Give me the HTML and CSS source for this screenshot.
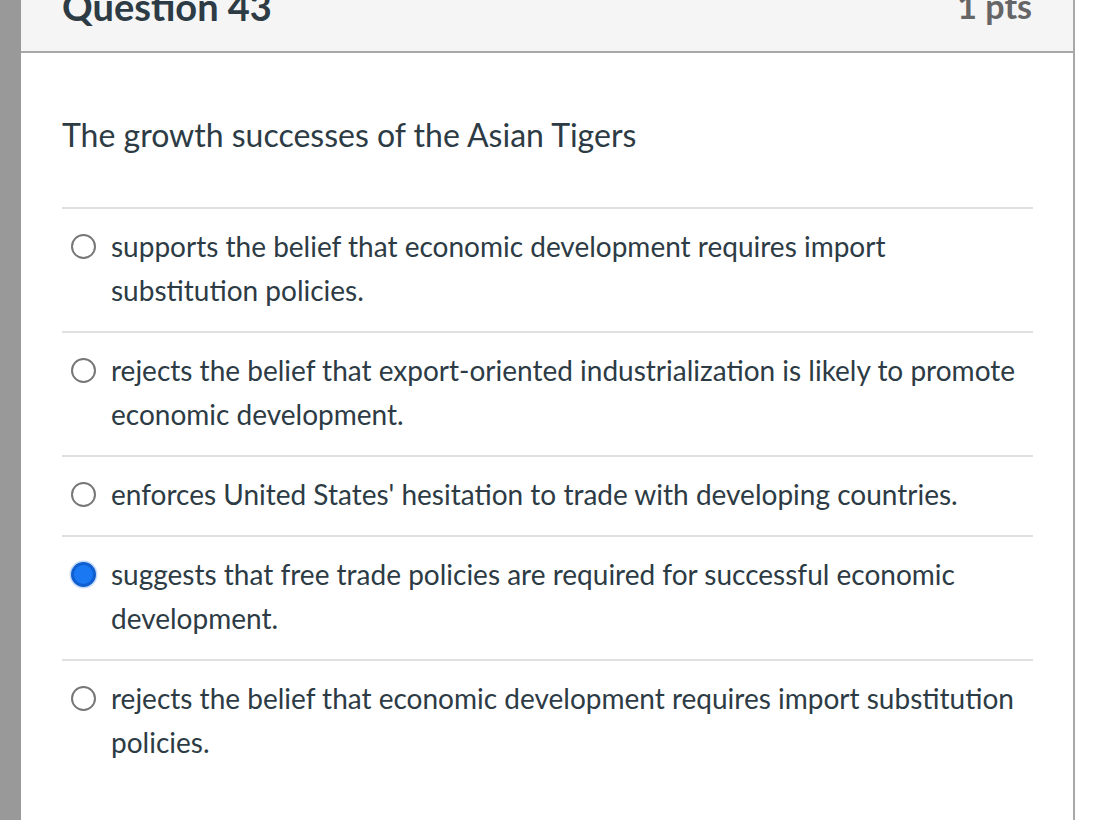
FILE: index.html
```html
<!DOCTYPE html>
<html>
<head>
<meta charset="utf-8">
<link rel="stylesheet" href="styles.css">
</head>
<body>
<div class="page">
  <div class="sidebar"></div>
  <div class="card">
    <div class="header">
      <h2 class="title">Question 43</h2>
      <div class="pts">1 pts</div>
    </div>
    <div class="content">
      <p class="question">The growth successes of the Asian Tigers</p>
      <div class="answers">
        <div class="answer">
          <span class="radio"></span>
          <span class="label">supports the belief that economic development requires import substitution policies.</span>
        </div>
        <div class="answer">
          <span class="radio"></span>
          <span class="label">rejects the belief that export-oriented industrialization is likely to promote economic development.</span>
        </div>
        <div class="answer">
          <span class="radio"></span>
          <span class="label">enforces United States' hesitation to trade with developing countries.</span>
        </div>
        <div class="answer">
          <span class="radio checked"></span>
          <span class="label">suggests that free trade policies are required for successful economic development.</span>
        </div>
        <div class="answer">
          <span class="radio"></span>
          <span class="label">rejects the belief that economic development requires import substitution policies.</span>
        </div>
      </div>
    </div>
  </div>
</div>
</body>
</html>
```
FILE: styles.css
```css
html, body {
  margin: 0;
  padding: 0;
  background: #ffffff;
  font-family: Lato, "Open Sans", sans-serif;
  color: #2d3b45;
}
.page {
  display: flex;
  height: 820px;
  overflow: hidden;
}
.sidebar {
  width: 21px;
  background: #999999;
  flex: none;
}
.card {
  width: 1052px;
  border-right: 2px solid #a8a8a8;
  flex: none;
}
.header {
  height: 51px;
  background: #f5f5f5;
  border-bottom: 2px solid #a8a8a8;
  display: flex;
  justify-content: space-between;
  align-items: flex-start;
  padding: 0 41px;
  overflow: hidden;
}
.title {
  margin: -18px 0 0 0;
  font-size: 38px;
  font-weight: 700;
  line-height: 48px;
  color: #2d3b45;
}
.pts {
  margin-top: -18px;
  font-size: 34px;
  font-weight: 700;
  line-height: 48px;
  color: #666666;
}
.content {
  padding: 0 40px 0 41px;
}
.question {
  margin: 0;
  padding: 60px 0 50px;
  font-size: 32px;
  line-height: 44px;
  border-bottom: 2px solid #e0e0e0;
}
.answer {
  display: flex;
  align-items: flex-start;
  padding: 15px 0 19px 9px;
  border-bottom: 2px solid #e0e0e0;
}
.answer:last-child {
  border-bottom: none;
}
.radio {
  flex: none;
  width: 25px;
  height: 25px;
  border: 2px solid #777777;
  border-radius: 50%;
  margin-top: 10px;
  margin-right: 15px;
  box-sizing: border-box;
}
.radio.checked {
  background: #1a78f2;
  border: 3px solid #0f5fd0;
  box-shadow: 0 0 0 1.5px #c8dcf8;
}
.label {
  font-size: 28px;
  line-height: 44px;
}
```
